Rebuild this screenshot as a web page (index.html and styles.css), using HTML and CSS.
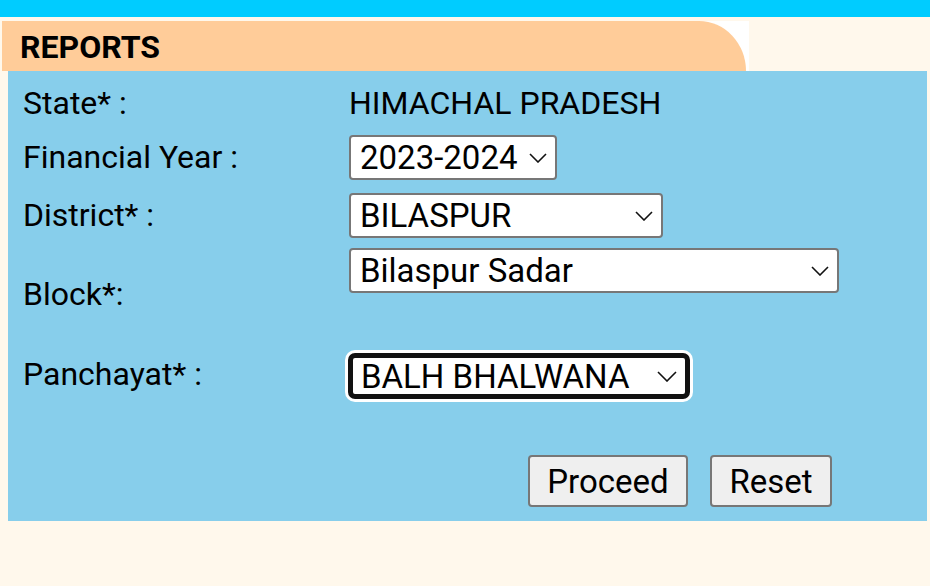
FILE: index.html
```html
<!DOCTYPE html>
<html lang="en">
<head>
<meta charset="utf-8">
<title>Reports</title>
<link rel="stylesheet" href="styles.css">
</head>
<body>
<div class="topbar"></div>
<div class="header">
  <div class="tab"><h1>REPORTS</h1></div>
  <div class="corner"><div class="curve"></div></div>
</div>
<form class="panel">
  <div class="row row-state">
    <span class="label">State* :</span>
    <span class="value">HIMACHAL PRADESH</span>
  </div>
  <div class="row row-fy">
    <span class="label">Financial Year :</span>
    <div class="select sel-fy"><span>2023-2024</span><svg class="chev" viewBox="0 0 18 10" width="18" height="10"><polyline points="1,1 9,9 17,1" fill="none" stroke="#111" stroke-width="1.6"/></svg></div>
  </div>
  <div class="row row-district">
    <span class="label">District* :</span>
    <div class="select sel-district"><span>BILASPUR</span><svg class="chev" viewBox="0 0 18 10" width="18" height="10"><polyline points="1,1 9,9 17,1" fill="none" stroke="#111" stroke-width="1.6"/></svg></div>
  </div>
  <div class="row row-block">
    <span class="label">Block*:</span>
    <div class="select sel-block"><span>Bilaspur Sadar</span><svg class="chev" viewBox="0 0 18 10" width="18" height="10"><polyline points="1,1 9,9 17,1" fill="none" stroke="#111" stroke-width="1.6"/></svg></div>
  </div>
  <div class="row row-panchayat">
    <span class="label">Panchayat* :</span>
    <div class="select sel-panchayat"><span>BALH BHALWANA</span><svg class="chev" viewBox="0 0 20 11" width="20" height="11"><polyline points="1,1 10,10 19,1" fill="none" stroke="#111" stroke-width="1.6"/></svg></div>
  </div>
  <div class="actions">
    <button type="button" class="btn btn-proceed">Proceed</button>
    <button type="button" class="btn btn-reset">Reset</button>
  </div>
</form>
</body>
</html>
```
FILE: styles.css
```css
* { box-sizing: border-box; }
html, body { margin: 0; padding: 0; }
body {
  background: #fff8ec;
  font-family: Roboto, "Liberation Sans", sans-serif;
  color: #000;
  width: 930px;
  height: 586px;
  overflow: hidden;
}
.topbar {
  height: 17px;
  background: #00ccff;
}
.header {
  display: flex;
  margin-top: 4px;
  margin-left: 2px;
  height: 50px;
}
.tab {
  width: 697px;
  background: #ffcc99;
}
.tab h1 {
  margin: 0;
  padding-left: 18px;
  font-size: 32px;
  font-weight: 700;
  line-height: 52px;
}
.corner {
  width: 50px;
  background: #fff;
}
.curve {
  width: 47px;
  height: 50px;
  background: #ffcc99;
  border-top-right-radius: 47px 50px;
}
.panel {
  margin: 0 0 0 8px;
  width: 919px;
  height: 450px;
  background: #87ceeb;
  padding: 15px 0 0 15px;
  display: flex;
  flex-direction: column;
}
.row {
  display: grid;
  grid-template-columns: 326px auto;
  align-items: center;
}
.label, .value {
  font-size: 32px;
  line-height: 35px;
}
.row-state { height: 35px; }
.row-fy { margin-top: 14px; height: 45px; }
.row-district { margin-top: 13px; height: 45px; }
.row-block { margin-top: 10px; height: 92px; }
.row-block .select { align-self: start; }
.row-panchayat { margin-top: 13px; height: 46px; }
.row-panchayat .label { padding-bottom: 3px; }
.select {
  height: 45px;
  display: flex;
  align-items: center;
  justify-content: space-between;
  background: #fff;
  border: 2px solid #777;
  border-radius: 4px;
  padding: 0 8px 0 9px;
  font-size: 33px;
  line-height: 35px;
  justify-self: start;
}
.sel-fy { width: 208px; }
.sel-district { width: 314px; }
.sel-block { width: 490px; }
.sel-panchayat {
  width: 342px;
  height: 46px;
  margin-left: -1px;
  border: 5px solid #111;
  border-radius: 7px;
  padding: 0 8px 0 8px;
  box-shadow: 0 0 0 3px #fff;
}
.chev { flex: none; }
.actions {
  margin-top: 56px;
  margin-left: 505px;
  display: flex;
  gap: 22px;
}
.btn {
  height: 52px;
  background: #efefef;
  border: 2px solid #777;
  border-radius: 4px;
  font-family: Roboto, "Liberation Sans", sans-serif;
  font-size: 33px;
  color: #000;
  padding: 0;
}
.btn-proceed { width: 160px; }
.btn-reset { width: 122px; }
```
